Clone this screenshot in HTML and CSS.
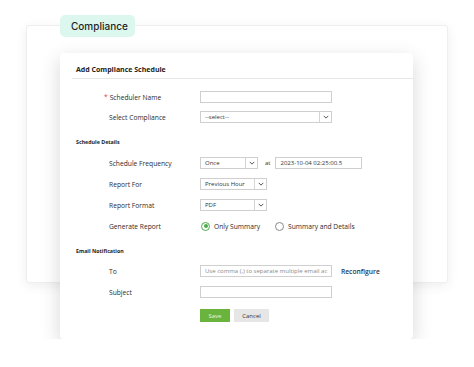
FILE: index.html
```html
<!DOCTYPE html>
<html lang="en">
<head>
    <meta charset="UTF-8">
    <meta name="viewport" content="width=device-width, initial-scale=1.0">
    <link rel="stylesheet" href="styles.css">
    <title>Compliance</title>
</head>
<body>

<div class="stage">
    <div class="back-card"></div>
    <div class="badge">Compliance</div>

    <div class="form-card">
        <div class="form-title">Add Compliance Schedule</div>

        <div class="row first">
            <div class="label"><span class="req">*</span>Scheduler Name</div>
            <div class="field"><div class="input w-long"></div></div>
        </div>
        <div class="row gap8">
            <div class="label">Select Compliance</div>
            <div class="field">
                <div class="select w-long"><span class="val">--select--</span><span class="arrow"><svg viewBox="0 0 8 5" width="6" height="4"><path d="M1 1l3 3 3-3" fill="none" stroke="#444" stroke-width="1.2"/></svg></span></div>
            </div>
        </div>

        <div class="section">Schedule Details</div>

        <div class="row gap10">
            <div class="label">Schedule Frequency</div>
            <div class="field">
                <div class="select w-once"><span class="val">Once</span><span class="arrow"><svg viewBox="0 0 8 5" width="6" height="4"><path d="M1 1l3 3 3-3" fill="none" stroke="#444" stroke-width="1.2"/></svg></span></div>
                <span class="at">at</span>
                <div class="input w-date"><span class="val">2023-10-04 02:25:00.5</span></div>
            </div>
        </div>
        <div class="row gap9">
            <div class="label">Report For</div>
            <div class="field">
                <div class="select w-mid"><span class="val">Previous Hour</span><span class="arrow"><svg viewBox="0 0 8 5" width="6" height="4"><path d="M1 1l3 3 3-3" fill="none" stroke="#444" stroke-width="1.2"/></svg></span></div>
            </div>
        </div>
        <div class="row gap9">
            <div class="label">Report Format</div>
            <div class="field">
                <div class="select w-mid"><span class="val">PDF</span><span class="arrow"><svg viewBox="0 0 8 5" width="6" height="4"><path d="M1 1l3 3 3-3" fill="none" stroke="#444" stroke-width="1.2"/></svg></span></div>
            </div>
        </div>
        <div class="row gap9">
            <div class="label">Generate Report</div>
            <div class="field">
                <span class="radio checked"></span><span class="radio-text">Only Summary</span>
                <span class="radio second"></span><span class="radio-text">Summary and Details</span>
            </div>
        </div>

        <div class="section email">Email Notification</div>

        <div class="row gap9">
            <div class="label">To</div>
            <div class="field">
                <div class="input w-long"><span class="val placeholder">Use comma (,) to separate multiple email ac</span></div>
                <a class="link">Reconfigure</a>
            </div>
        </div>
        <div class="row gap9">
            <div class="label">Subject</div>
            <div class="field"><div class="input w-long"></div></div>
        </div>
        <div class="row buttons">
            <div class="label"></div>
            <div class="field">
                <button class="btn save">Save</button>
                <button class="btn cancel">Cancel</button>
            </div>
        </div>
    </div>
</div>

</body>
</html>
```

FILE: styles.css
```css
body {
    margin: 0;
    background: #ffffff;
    font-family: "Open Sans", sans-serif;
    color: #333333;
}

.stage {
    display: grid;
    width: 422px;
    margin: 15px 0 0 26px;
}

.stage > div {
    grid-area: 1 / 1;
}

.back-card {
    margin-top: 10px;
    height: 256px;
    background: #ffffff;
    border: 1px solid #eeeeee;
    border-radius: 3px;
    box-shadow: 0 3px 12px rgba(0, 0, 0, 0.07);
}

.badge {
    justify-self: start;
    align-self: start;
    margin-left: 34px;
    width: 75px;
    height: 22px;
    box-sizing: border-box;
    padding-left: 11px;
    line-height: 22px;
    background: #dcf7ee;
    border-radius: 5px;
    font-family: Inter, sans-serif;
    font-size: 10px;
    font-weight: 500;
    color: #1e1e1e;
}

.form-card {
    justify-self: start;
    align-self: start;
    margin: 38px 0 0 34px;
    width: 353px;
    height: 286px;
    background: #ffffff;
    border-radius: 4px;
    box-shadow: 0 6px 20px rgba(0, 0, 0, 0.16);
    display: flex;
    flex-direction: column;
}

.form-title {
    margin-left: 12px;
    padding: 12px 0 3px 4px;
    line-height: 10px;
    font-size: 7px;
    font-weight: 700;
    color: #222222;
    border-bottom: 1px solid #e6e6e6;
}

.row {
    display: grid;
    grid-template-columns: 91px auto;
    align-items: center;
    height: 12px;
    padding-left: 49px;
}

.row.first { margin-top: 12px; }
.row.gap8 { margin-top: 8px; }
.row.gap9 { margin-top: 9px; }
.row.gap10 { margin-top: 10px; }
.row.buttons { margin-top: 11px; height: 13px; }

.label {
    font-size: 6.7px;
    color: #2b2b2b;
    white-space: nowrap;
}

.req {
    color: #e8403a;
    margin-left: -5px;
    margin-right: 2px;
}

.field {
    display: flex;
    align-items: center;
    height: 100%;
}

.input,
.select {
    box-sizing: border-box;
    height: 12px;
    border: 1px solid #cfcfcf;
    background: #ffffff;
    display: flex;
    align-items: center;
    overflow: hidden;
}

.val {
    flex: 1;
    padding-left: 4px;
    font-size: 6px;
    color: #333333;
    white-space: nowrap;
    overflow: hidden;
}

.placeholder {
    color: #8a8a8a;
}

.arrow {
    width: 11px;
    height: 100%;
    border-left: 1px solid #d5d5d5;
    display: flex;
    align-items: center;
    justify-content: center;
}

.w-long { width: 132px; }
.w-once { width: 58px; }
.w-mid { width: 67px; }
.w-date { width: 87px; }

.at {
    font-size: 6px;
    margin: 0 5px 0 7px;
    color: #333333;
}

.section {
    margin: 14px 0 0 16px;
    line-height: 10px;
    font-size: 5.3px;
    font-weight: 700;
    color: #222222;
}

.section.email {
    margin-top: 14px;
}

.radio {
    box-sizing: border-box;
    width: 9px;
    height: 9px;
    border-radius: 50%;
    border: 1px solid #8a8a8a;
    margin-left: 1px;
    display: flex;
    align-items: center;
    justify-content: center;
}

.radio.checked {
    border-color: #4caa4a;
}

.radio.checked::after {
    content: "";
    width: 4px;
    height: 4px;
    border-radius: 50%;
    background: #4caa4a;
}

.radio.second {
    margin-left: 15px;
}

.radio-text {
    font-size: 6.7px;
    margin-left: 4px;
    color: #2b2b2b;
}

.link {
    margin-left: 9px;
    font-size: 6.7px;
    font-weight: 600;
    color: #1d3557;
    white-space: nowrap;
}

.btn {
    height: 13px;
    border: none;
    padding: 0;
    font-family: "Open Sans", sans-serif;
    font-size: 6px;
    cursor: pointer;
}

.save {
    width: 30px;
    background: #6ab43e;
    color: #e9f5e0;
}

.cancel {
    width: 35px;
    margin-left: 4px;
    background: #e6e6e6;
    color: #333333;
}
```
